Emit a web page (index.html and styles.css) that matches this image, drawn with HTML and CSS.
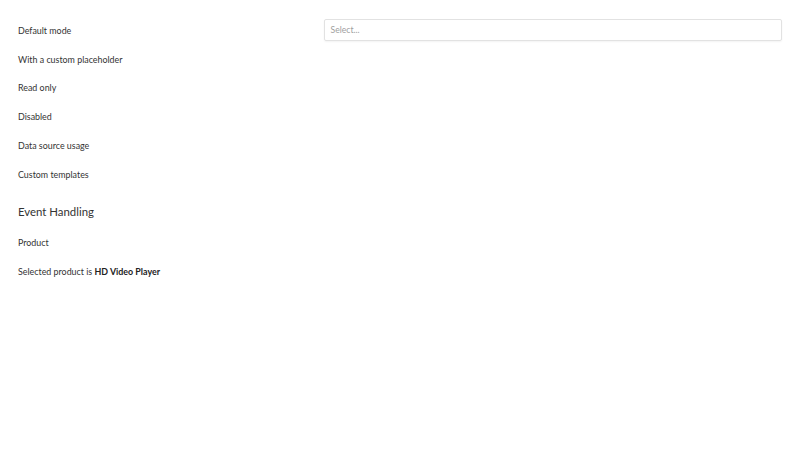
FILE: index.html
```html
<!DOCTYPE html>
<html>
<head>
<meta charset="utf-8">
<link rel="stylesheet" href="styles.css">
</head>
<body>
<div class="page">
  <div class="row">
    <div class="label">Default mode</div>
    <div class="field"><div class="select"><span class="placeholder">Select...</span></div></div>
  </div>
  <div class="row"><div class="label">With a custom placeholder</div><div class="field"></div></div>
  <div class="row"><div class="label">Read only</div><div class="field"></div></div>
  <div class="row"><div class="label">Disabled</div><div class="field"></div></div>
  <div class="row"><div class="label">Data source usage</div><div class="field"></div></div>
  <div class="row"><div class="label">Custom templates</div><div class="field"></div></div>
  <h2 class="heading">Event Handling</h2>
  <div class="row"><div class="label">Product</div><div class="field"></div></div>
  <div class="row tall"><div class="label">Selected product is <b>HD Video Player</b></div></div>
</div>
</body>
</html>
```
FILE: styles.css
```css
html, body {
  margin: 0;
  padding: 0;
  background: #ffffff;
}
body {
  font-family: "Lato", "Open Sans", sans-serif;
  font-size: 8.9px;
  color: #333333;
}
.page {
  padding: 16px 18px;
}
.row {
  display: grid;
  grid-template-columns: 40% 60%;
  align-items: center;
  height: 28.8px;
}
.row.tall {
  height: 30px;
}
.label {
  line-height: 14px;
  white-space: nowrap;
  padding-top: 1px;
}
.label b {
  font-weight: 700;
  color: #222;
}
.select {
  height: 20px;
  border: 1px solid #e2e2e2;
  border-radius: 2px;
  box-shadow: 0 1px 2px rgba(0,0,0,0.05);
  display: flex;
  align-items: center;
  padding: 0 6px;
  box-sizing: content-box;
}
.placeholder {
  color: #a0a0a0;
  font-size: 8.6px;
}
.heading {
  font-weight: 400;
  font-size: 11.4px;
  margin: 13px 0 6px 0;
  color: #333;
  line-height: 20px;
}
```
